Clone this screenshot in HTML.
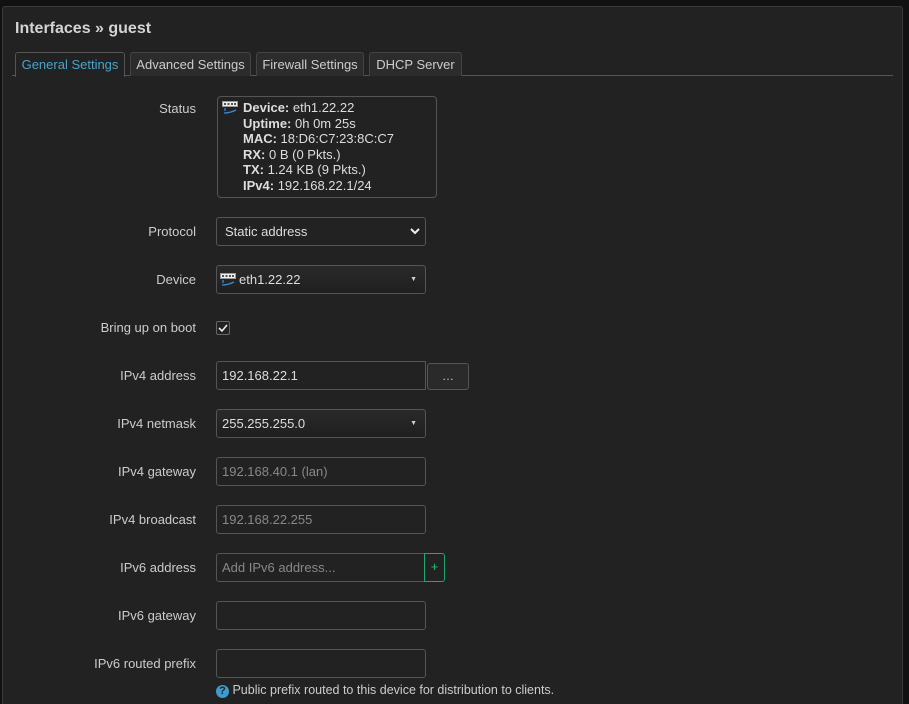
<!DOCTYPE html>
<html><head><meta charset="utf-8"><style>
*{box-sizing:border-box;margin:0;padding:0}
html,body{width:909px;height:704px;overflow:hidden}
body{background:#111;font-family:"Liberation Sans",Arial,sans-serif;font-size:13px;color:#ddd;position:relative}
.modal{position:absolute;left:2px;top:6px;width:901px;height:710px;background:#222;border:1px solid #3a3a3a;border-radius:3px}
h2{position:absolute;left:15px;top:20px;font-size:16px;font-weight:bold;color:#d4d4d4}
.tabline{position:absolute;left:12px;top:75px;width:881px;height:1px;background:#555}
.tab{position:absolute;top:52px;height:24px;background:#2c2c2c;border:1px solid #444;border-bottom:none;border-radius:3px 3px 0 0;color:#ccc;font-size:13px;line-height:23px;text-align:center}
.tab.a{background:#222;color:#4aa3c9;border-color:#555;height:25px}
.lbl{position:absolute;right:713px;font-size:13px;color:#ccc;white-space:nowrap}
.inp{position:absolute;left:216px;width:210px;height:29px;border:1px solid #555;border-radius:3px;background:#222;color:#ddd;font-size:13px;line-height:27px;padding-left:5px}
.ph{color:#888}
.status{position:absolute;left:217px;top:96px;width:220px;height:102px;border:1px solid #555;border-radius:4px;padding:3px 0 0 25px;line-height:15.6px;font-size:13px;color:#ddd}
b{color:#ddd}
.ic{position:absolute}
</style></head><body>
<div class="modal"></div>
<h2>Interfaces » guest</h2>
<div class="tabline"></div>
<div class="tab a" style="left:15px;width:110px">General Settings</div>
<div class="tab" style="left:130px;width:121px">Advanced Settings</div>
<div class="tab" style="left:256px;width:108px">Firewall Settings</div>
<div class="tab" style="left:369px;width:93px">DHCP Server</div>

<div class="lbl" style="top:101px">Status</div>
<div class="status">
<svg class="ic" style="left:4px;top:4px" width="16" height="14" viewBox="0 0 16 14"><rect x="0.5" y="0.5" width="15" height="5" fill="#eee" stroke="#999"/><rect x="2" y="2" width="2" height="2" fill="#555"/><rect x="5.5" y="2" width="2" height="2" fill="#555"/><rect x="9" y="2" width="2" height="2" fill="#555"/><rect x="12" y="2" width="2" height="2" fill="#555"/><path d="M3 7v3M2 12c4 0 8-1 12-3" stroke="#3a8ad6" stroke-width="1.3" fill="none"/></svg>
<b>Device:</b> eth1.22.22<br><b>Uptime:</b> 0h 0m 25s<br><b>MAC:</b> 18:D6:C7:23:8C:C7<br><b>RX:</b> 0 B (0 Pkts.)<br><b>TX:</b> 1.24 KB (9 Pkts.)<br><b>IPv4:</b> 192.168.22.1/24
</div>

<div class="lbl" style="top:224px">Protocol</div>
<div class="inp" style="top:217px;padding-left:8px">Static address<svg style="position:absolute;right:5px;top:10px" width="10" height="7" viewBox="0 0 10 7"><path d="M1 1l4 4 4-4" stroke="#eee" stroke-width="2" fill="none"/></svg></div>

<div class="lbl" style="top:272px">Device</div>
<div class="inp" style="top:265px;padding-left:22px;background:linear-gradient(#2a2a2a,#1f1f1f)">eth1.22.22
<svg class="ic" style="left:3px;top:7px" width="16" height="14" viewBox="0 0 16 14"><rect x="0.5" y="0.5" width="15" height="5" fill="#eee" stroke="#999"/><rect x="2" y="2" width="2" height="2" fill="#555"/><rect x="5.5" y="2" width="2" height="2" fill="#555"/><rect x="9" y="2" width="2" height="2" fill="#555"/><rect x="12" y="2" width="2" height="2" fill="#555"/><path d="M3 7v3M2 12c4 0 8-1 12-3" stroke="#3a8ad6" stroke-width="1.3" fill="none"/></svg>
<span style="position:absolute;right:8px;top:0;font-size:7px;color:#ccc">▼</span></div>

<div class="lbl" style="top:320px">Bring up on boot</div>
<div style="position:absolute;left:216px;top:321px;width:14px;height:14px;border:1px solid #666;border-radius:2px;background:#222"><svg width="12" height="12" viewBox="0 0 12 12" style="position:absolute;left:0;top:0"><path d="M2 6l3 3 5-6" stroke="#eee" stroke-width="1.6" fill="none"/></svg></div>

<div class="lbl" style="top:368px">IPv4 address</div>
<div class="inp" style="top:361px;border-radius:3px 0 0 3px">192.168.22.1</div>
<div style="position:absolute;left:427px;top:363px;width:42px;height:27px;border:1px solid #555;border-radius:3px;background:#2a2a2a;color:#ccc;text-align:center;line-height:24px;font-size:12px">…</div>

<div class="lbl" style="top:416px">IPv4 netmask</div>
<div class="inp" style="top:409px;background:linear-gradient(#2a2a2a,#1f1f1f)">255.255.255.0<span style="position:absolute;right:8px;top:0;font-size:7px;color:#ccc">▼</span></div>

<div class="lbl" style="top:464px">IPv4 gateway</div>
<div class="inp ph" style="top:457px">192.168.40.1 (lan)</div>

<div class="lbl" style="top:512px">IPv4 broadcast</div>
<div class="inp ph" style="top:505px">192.168.22.255</div>

<div class="lbl" style="top:560px">IPv6 address</div>
<div class="inp ph" style="top:553px;width:209px;border-radius:3px 0 0 3px">Add IPv6 address...</div>
<div style="position:absolute;left:424px;top:553px;width:21px;height:29px;border:1px solid #1fa86a;border-radius:0 3px 3px 0;background:#222;color:#1fbf77;text-align:center;line-height:26px;font-size:13px">+</div>

<div class="lbl" style="top:608px">IPv6 gateway</div>
<div class="inp" style="top:601px"></div>

<div class="lbl" style="top:656px">IPv6 routed prefix</div>
<div class="inp" style="top:649px"></div>
<div style="position:absolute;left:216px;top:683px;font-size:12.5px;color:#ccc;white-space:nowrap"><span style="display:inline-block;width:13px;height:13px;border-radius:50%;background:#3d9bd0;color:#222;font-weight:bold;font-size:11px;line-height:13px;text-align:center;vertical-align:0px">?</span> Public prefix routed to this device for distribution to clients.</div>
</body></html>
